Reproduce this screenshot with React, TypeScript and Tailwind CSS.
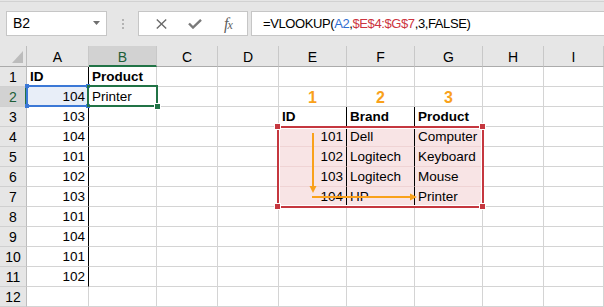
import React from "react";

type C = {
  t?: string;
  b?: boolean;
  r?: boolean; // right aligned
  c?: boolean; // centered
  orange?: boolean;
};

const COLS = ["A", "B", "C", "D", "E", "F", "G", "H", "I"];

const data: Record<string, C> = {
  A1: { t: "ID", b: true },
  B1: { t: "Product", b: true },
  B2: { t: "Printer" },
  E2: { t: "1", c: true, orange: true },
  F2: { t: "2", c: true, orange: true },
  G2: { t: "3", c: true, orange: true },
  E3: { t: "ID", b: true },
  F3: { t: "Brand", b: true },
  G3: { t: "Product", b: true },
  E4: { t: "101", r: true },
  E5: { t: "102", r: true },
  E6: { t: "103", r: true },
  E7: { t: "104", r: true },
  F4: { t: "Dell" },
  F5: { t: "Logitech" },
  F6: { t: "Logitech" },
  F7: { t: "HP" },
  G4: { t: "Computer" },
  G5: { t: "Keyboard" },
  G6: { t: "Mouse" },
  G7: { t: "Printer" },
};
const colA = ["104", "103", "104", "101", "102", "103", "101", "104", "101", "102"];
colA.forEach((v, i) => {
  data["A" + (i + 2)] = { t: v, r: true };
});

function Cell({ col, row }: { col: string; row: number }) {
  const key = col + row;
  const d = data[key];
  const blackRight =
    (col === "A" && row >= 1 && row <= 11) ||
    ((col === "E" || col === "F") && row >= 3 && row <= 7);
  const pink = ["E", "F", "G"].includes(col) && row >= 4 && row <= 7;
  const blue = key === "A2";
  return (
    <div
      className={
        "h-[20px] border-b border-r whitespace-nowrap overflow-visible px-[3px] " +
        (blackRight ? "border-r-black " : "border-r-[#d4d4d4] ") +
        (pink ? "bg-[#f8e4e5] border-b-[#efd3d4] " : blue ? "bg-[#e8eef8] border-b-[#d4d4d4] " : "bg-white border-b-[#d4d4d4] ") +
        (d?.r ? "text-right " : d?.c ? "text-center " : "text-left ") +
        (d?.orange
          ? "font-bold text-[16px] text-[#f9a11b] leading-[21px] "
          : (d?.b ? "font-bold " : "") + "text-[13.5px] text-black leading-[19px] ")
      }
    >
      {d?.t ?? ""}
    </div>
  );
}

export default function App() {
  const rows = Array.from({ length: 12 }, (_, i) => i + 1);
  return (
    <div className="w-[604px] h-[307px] overflow-hidden bg-[#e6e6e6] font-['Liberation_Sans',Arial,sans-serif]">
      {/* Formula bar area */}
      <div className="h-[46px]">
        <div className="h-[2px] border-b border-[#d2d2d2]" />
        <div className="mt-[9px] flex items-start">
          <div className="ml-[6px] w-[101px] h-[25px] bg-white border border-[#c6c6c6] flex items-center justify-between pl-[6px] pr-[6px]">
            <span className="text-[14px] text-black">B2</span>
            <svg width="7" height="5" viewBox="0 0 7 5">
              <polygon points="0,0 7,0 3.5,4" fill="#6f6f6f" />
            </svg>
          </div>
          <div className="w-[31px] h-[25px] flex flex-col items-center justify-center gap-[2px]">
            <div className="w-[2px] h-[2px] bg-[#b3b3b3]" />
            <div className="w-[2px] h-[2px] bg-[#b3b3b3]" />
            <div className="w-[2px] h-[2px] bg-[#b3b3b3]" />
          </div>
          <div className="w-[110px] h-[25px] bg-white border border-[#c6c6c6] flex items-center">
            <div className="w-[40px] flex justify-center pl-[4px]">
              <svg width="11" height="10" viewBox="0 0 11 10">
                <path d="M0.8 0.5 L10.2 9.5 M10.2 0.5 L0.8 9.5" stroke="#6b6b6b" strokeWidth="1.4" />
              </svg>
            </div>
            <div className="w-[32px] flex justify-center">
              <svg width="14" height="10" viewBox="0 0 14 10">
                <path d="M1 4.5 L5 8.5 L13 0.8" stroke="#7a7a7a" strokeWidth="2.4" fill="none" />
              </svg>
            </div>
            <div className="w-[34px] flex justify-center items-center">
              <span className="font-['Liberation_Serif',serif] italic text-[16px] text-[#5f5f5f] leading-none tracking-[-1px]">
                f<span className="text-[12px]">x</span>
              </span>
            </div>
          </div>
          <div className="ml-[3px] flex-1 h-[25px] bg-white border border-r-0 border-[#c6c6c6] flex items-center pl-[11px]">
            <span className="text-[13px] tracking-[-0.4px] text-black whitespace-nowrap">
              =VLOOKUP(<span className="text-[#2f6ed1]">A2</span>,
              <span className="text-[#cc3440]">$E$4:$G$7</span>,3,FALSE)
            </span>
          </div>
        </div>
      </div>

      {/* Grid */}
      <div className="relative">
        <div className="grid grid-cols-[27px_62px_68px_61px_61px_68px_68px_68px_61px_60px]">
          {/* header row */}
          <div className="h-[21px] border-r border-b border-r-[#bdbdbd] border-b-[#ababab] flex items-end justify-end pr-[3px] pb-[3px]">
            <svg width="11" height="12" viewBox="0 0 11 12">
              <polygon points="0,12 11,12 11,0" fill="#bcbcbc" />
            </svg>
          </div>
          {COLS.map((c) => (
            <div
              key={c}
              className={
                "h-[21px] flex items-center justify-center text-[14px] pt-[3px] border-r border-r-[#c8c8c8] " +
                (c === "B"
                  ? "bg-[#d2d2d2] border-b-2 border-b-[#217346] text-[#1d5e38]"
                  : "border-b border-b-[#ababab] text-black")
              }
            >
              {c}
            </div>
          ))}
          {rows.map((r) => (
            <React.Fragment key={r}>
              <div
                className={
                  "h-[20px] flex items-center justify-center text-[14px] pt-[1px] border-b border-b-[#d0d0d0] " +
                  (r === 2
                    ? "bg-[#d2d2d2] border-r-2 border-r-[#217346] text-[#1d5e38] pl-[1px]"
                    : "border-r border-r-[#bdbdbd] text-black")
                }
              >
                {r}
              </div>
              {COLS.map((c) => (
                <Cell key={c + r} col={c} row={r} />
              ))}
            </React.Fragment>
          ))}
        </div>

        {/* Overlays */}
        {/* A2 reference (blue) */}
        <div className="absolute left-[26px] top-[39px] w-[63px] h-[22px] border-2 border-[#3b78d6] pointer-events-none" />
        <div className="absolute left-[25px] top-[38px] w-[4px] h-[4px] bg-[#3b78d6]" />
        <div className="absolute left-[86px] top-[38px] w-[4px] h-[4px] bg-[#3b78d6]" />
        <div className="absolute left-[25px] top-[58px] w-[4px] h-[4px] bg-[#3b78d6]" />
        <div className="absolute left-[86px] top-[58px] w-[4px] h-[4px] bg-[#3b78d6]" />
        {/* Active cell B2 */}
        <div className="absolute left-[87px] top-[39px] w-[71px] h-[22px] border-2 border-[#217346] pointer-events-none" />
        <div className="absolute left-[154px] top-[57px] w-[7px] h-[7px] bg-[#217346] border border-white" />
        {/* Red range E4:G7 */}
        <div className="absolute left-[277px] top-[80px] w-[207px] h-[82px] border-2 border-[#c5373f] shadow-[inset_0_0_0_1px_white] pointer-events-none" />
        <div className="absolute left-[274px] top-[77px] w-[7px] h-[7px] bg-[#c5373f] border border-white" />
        <div className="absolute left-[479px] top-[77px] w-[7px] h-[7px] bg-[#c5373f] border border-white" />
        <div className="absolute left-[274px] top-[157px] w-[7px] h-[7px] bg-[#c5373f] border border-white" />
        <div className="absolute left-[479px] top-[157px] w-[7px] h-[7px] bg-[#c5373f] border border-white" />
        {/* Arrows */}
        <svg className="absolute left-0 top-0 pointer-events-none" width="604" height="261" viewBox="0 0 604 261">
          <line x1="313" y1="87" x2="313" y2="141" stroke="#f9a11b" strokeWidth="2" />
          <polygon points="309.5,140 316.5,140 313,147" fill="#f9a11b" />
          <line x1="312" y1="151" x2="411" y2="151" stroke="#f9a11b" strokeWidth="2" />
          <polygon points="410,147.5 410,154.5 417,151" fill="#f9a11b" />
        </svg>
      </div>
    </div>
  );
}
